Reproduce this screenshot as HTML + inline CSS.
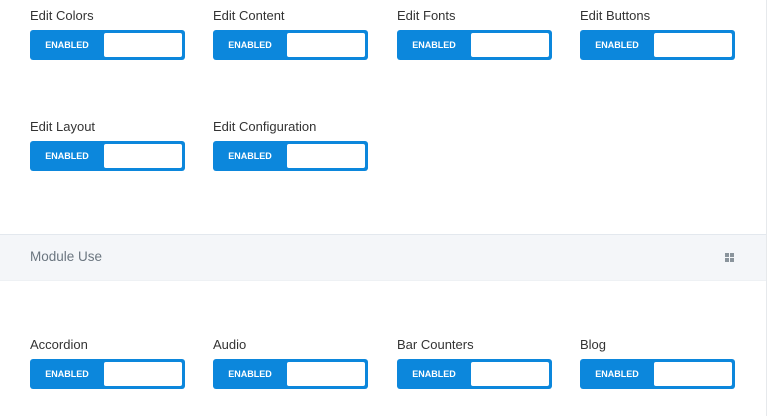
<!DOCTYPE html><html><head><style>
body{margin:0;width:768px;height:416px;background:#fff;position:relative;overflow:hidden;font-family:"Liberation Sans",sans-serif}
.l{position:absolute;font-size:13px;color:#333}
.t{position:absolute;width:155px;height:30px;background:#0c87dc;border-radius:3px}
.t span{position:absolute;left:0;width:74px;top:0;line-height:30px;text-align:center;color:#fff;font-size:9px;font-weight:bold}
.t i{position:absolute;left:74px;top:3px;width:78px;height:24px;background:#fff;border-radius:2px}
.band{position:absolute;left:0;top:234px;width:766px;height:45px;background:#f4f6f9;border-top:1px solid #e3e8ee;border-bottom:1px solid #eef1f4}
.band div{position:absolute;left:30px;top:14px;font-size:13.5px;color:#6b7680}
.rl{position:absolute;left:766px;top:0;width:1px;height:416px;background:#e6e9ec}
</style></head><body>
<div class="rl"></div>
<div class="band"><div>Module Use</div>
<svg style="position:absolute;left:725px;top:18px" width="9" height="9"><rect x="0" y="0" width="4" height="4" fill="#8a949c"/><rect x="5" y="0" width="4" height="4" fill="#8a949c"/><rect x="0" y="5" width="4" height="4" fill="#8a949c"/><rect x="5" y="5" width="4" height="4" fill="#8a949c"/></svg></div>
<div class="l" style="left:30px;top:8px">Edit Colors</div><div class="t" style="left:30px;top:30px"><span>ENABLED</span><i></i></div>
<div class="l" style="left:213px;top:8px">Edit Content</div><div class="t" style="left:213px;top:30px"><span>ENABLED</span><i></i></div>
<div class="l" style="left:397px;top:8px">Edit Fonts</div><div class="t" style="left:397px;top:30px"><span>ENABLED</span><i></i></div>
<div class="l" style="left:580px;top:8px">Edit Buttons</div><div class="t" style="left:580px;top:30px"><span>ENABLED</span><i></i></div>
<div class="l" style="left:30px;top:119px">Edit Layout</div><div class="t" style="left:30px;top:141px"><span>ENABLED</span><i></i></div>
<div class="l" style="left:213px;top:119px">Edit Configuration</div><div class="t" style="left:213px;top:141px"><span>ENABLED</span><i></i></div>
<div class="l" style="left:30px;top:337px">Accordion</div><div class="t" style="left:30px;top:359px"><span>ENABLED</span><i></i></div>
<div class="l" style="left:213px;top:337px">Audio</div><div class="t" style="left:213px;top:359px"><span>ENABLED</span><i></i></div>
<div class="l" style="left:397px;top:337px">Bar Counters</div><div class="t" style="left:397px;top:359px"><span>ENABLED</span><i></i></div>
<div class="l" style="left:580px;top:337px">Blog</div><div class="t" style="left:580px;top:359px"><span>ENABLED</span><i></i></div>
</body></html>
